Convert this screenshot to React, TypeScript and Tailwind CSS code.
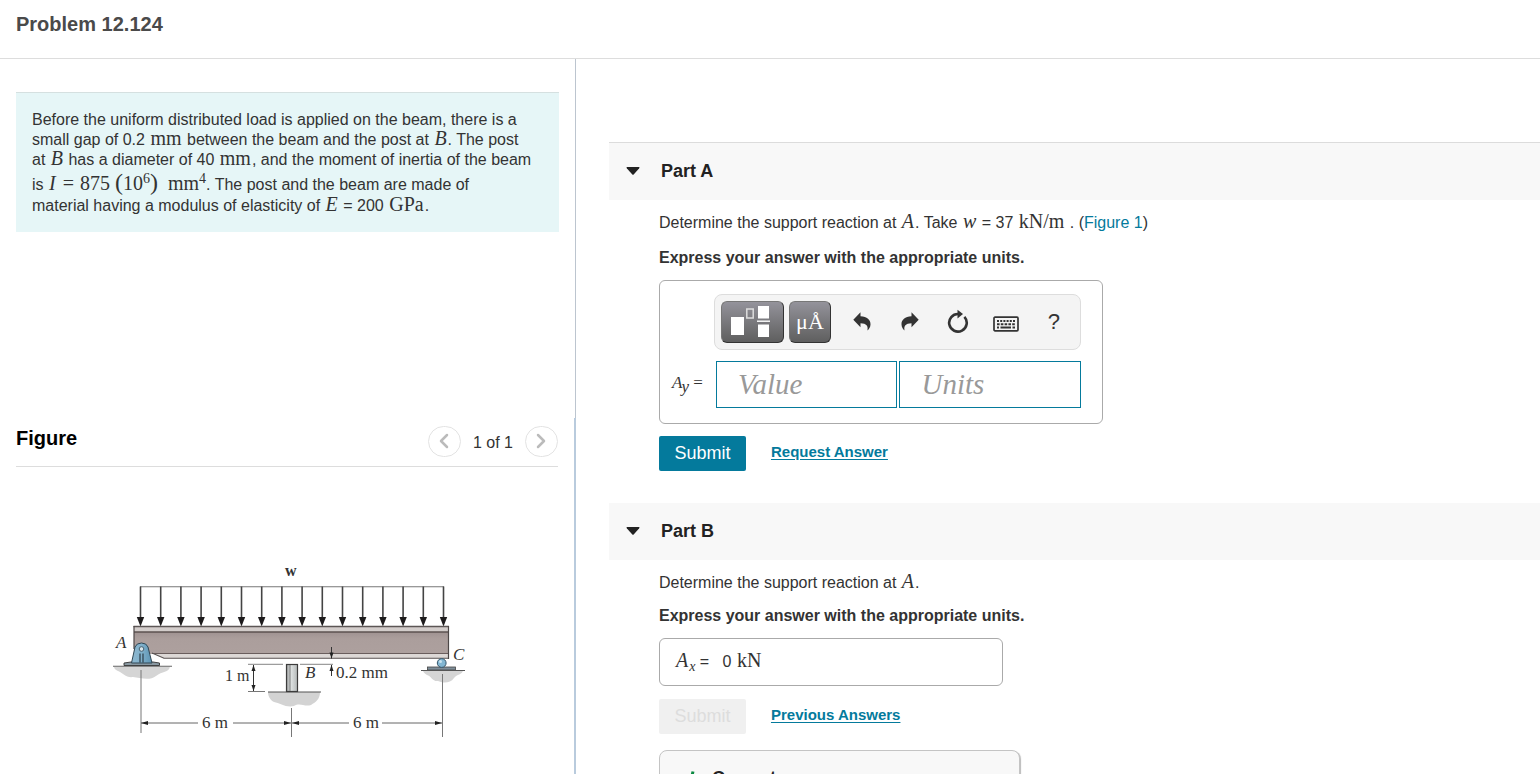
import React from "react";
import { ChevronLeft, ChevronRight } from "lucide-react";

function Sym({ children }: { children: React.ReactNode }) {
  return (
    <i className="px-px font-['Liberation_Serif',serif] text-[20px] leading-4">{children}</i>
  );
}

function Unit({ children }: { children: React.ReactNode }) {
  return (
    <span className="px-px font-['Liberation_Serif',serif] text-[20px] leading-4">{children}</span>
  );
}

function HArrow({ from, to, y }: { from: number; to: number; y: number }) {
  const d = to > from ? -7 : 7;
  return (
    <g>
      <line x1={from} y1={y} x2={to} y2={y} stroke="#555" strokeWidth="0.9" />
      <polygon points={`${to},${y} ${to + d},${y - 2} ${to + d},${y + 2}`} fill="#222" />
    </g>
  );
}

function VArrow({ x, from, to }: { x: number; from: number; to: number }) {
  const d = to > from ? -6 : 6;
  return (
    <g>
      <line x1={x} y1={from} x2={x} y2={to} stroke="#333" strokeWidth="1" />
      <polygon points={`${x},${to} ${x - 2},${to + d} ${x + 2},${to + d}`} fill="#222" />
    </g>
  );
}

function BeamFigure() {
  const loads = Array.from({ length: 16 }, (_, i) => 40.5 + i * 20.2);
  return (
    <svg
      viewBox="0 0 380 190"
      role="img"
      aria-label="Beam ABC with a uniform load w"
      className="h-[190px] w-[380px] font-['Liberation_Serif',serif]"
      fill="#333"
    >
      <defs>
        <linearGradient id="web" x1="0" y1="0" x2="0" y2="1">
          <stop offset="0" stopColor="#9f9291" />
          <stop offset="0.3" stopColor="#ab9e9c" />
          <stop offset="1" stopColor="#ada09e" />
        </linearGradient>
        <linearGradient id="steel" x1="0" y1="0" x2="1" y2="0">
          <stop offset="0" stopColor="#8fb9d0" />
          <stop offset="0.5" stopColor="#7fb0cb" />
          <stop offset="1" stopColor="#5c93b2" />
        </linearGradient>
        <linearGradient id="post" x1="0" y1="0" x2="1" y2="0">
          <stop offset="0" stopColor="#9a9c9c" />
          <stop offset="0.4" stopColor="#dfe3e3" />
          <stop offset="1" stopColor="#b4b8b8" />
        </linearGradient>
      </defs>

      <line x1="40" y1="31.8" x2="344" y2="31.8" stroke="#777" strokeWidth="1.1" />
      {loads.map((x) => (
        <g key={x}>
          <line x1={x} y1="31.5" x2={x} y2="64" stroke="#444" strokeWidth="1.6" />
          <polygon points={`${x - 3.7},62 ${x + 3.7},62 ${x},71.5`} fill="#1d1b1c" />
        </g>
      ))}

      <rect x="34" y="71.5" width="314.5" height="6" fill="#d3cdcb" />
      <rect x="34" y="77" width="314.5" height="22" fill="url(#web)" />
      <polygon points="54,98.5 348.5,98.5 348.5,103.5 64,103.5" fill="#ddd8d6" />
      <line x1="33.5" y1="71.5" x2="349" y2="71.5" stroke="#5c5655" strokeWidth="1.3" />
      <line x1="34" y1="77" x2="348.5" y2="77" stroke="#5c5251" strokeWidth="1.5" />
      <line x1="52" y1="98.5" x2="348.5" y2="98.5" stroke="#6a5e5d" strokeWidth="1.1" />
      <path d="M52 98 L64 103.3 H349" fill="none" stroke="#5c5655" strokeWidth="1.1" />
      <line x1="34" y1="71" x2="34" y2="94" stroke="#4d4747" strokeWidth="1.2" />
      <line x1="348.5" y1="71" x2="348.5" y2="104" stroke="#4d4747" strokeWidth="1.2" />

      <path d="M14 111.5 H70 C69 118 62 116 56 121 C50 126 40 123 33 122 C26 123 23 118 18 116 C15 115 14 113 14 111.5Z" fill="#d5d5d5" />
      <line x1="13" y1="111.3" x2="72" y2="111.3" stroke="#666" strokeWidth="1.1" />
      <path d="M24 110.5 V108 L31 107 H53 L59.5 108 V110.5Z" fill="#8998a1" stroke="#333" strokeWidth="0.9" />
      <path d="M31.5 108 L35 92 Q36.5 88 41.5 88 Q46.5 88 48 92 L52 108Z" fill="url(#steel)" stroke="#304754" strokeWidth="1" />
      <circle cx="41.5" cy="94" r="2.3" fill="#d8e5eb" stroke="#47616f" strokeWidth="1" />
      <path d="M40 98.5 V107.5 M43 98.5 V107.5" stroke="#26343c" strokeWidth="1.1" />

      <path d="M168 137 H220 C220 144 216 147 211 150 C204 152 200 147 194 151 C186 153 180 148 174 147 C170 145 168 141 168 137Z" fill="#d3d3d3" />
      <line x1="168" y1="137" x2="221" y2="137" stroke="#555" strokeWidth="1.1" />
      <rect x="186.5" y="109.5" width="11" height="27" fill="url(#post)" stroke="#3c3c3c" strokeWidth="1.2" />
      <line x1="190" y1="110" x2="190" y2="136" stroke="#666" strokeWidth="0.8" />
      <line x1="148" y1="109.3" x2="183" y2="109.3" stroke="#777" strokeWidth="0.9" />
      <line x1="200" y1="109.3" x2="233" y2="109.3" stroke="#777" strokeWidth="0.9" />
      <line x1="148" y1="136.5" x2="165" y2="136.5" stroke="#777" strokeWidth="1" />
      <VArrow x={153.5} from={122} to={110} />
      <VArrow x={153.5} from={122} to={136} />
      <VArrow x={231.5} from={92} to={103.5} />
      <VArrow x={231.5} from={121} to={110} />

      <path d="M323 115.5 H363 C362 120 357 119 354 123 C350 129 342 128 338 126 C333 127 331 121 327 120 C324 118 323 117 323 115.5Z" fill="#d5d5d5" />
      <rect x="327.5" y="112" width="28" height="3" fill="#7f8e99" stroke="#444" strokeWidth="0.8" />
      <line x1="321" y1="115.5" x2="365" y2="115.5" stroke="#555" strokeWidth="1" />
      <circle cx="341.7" cy="108" r="4.4" fill="#82b6d2" stroke="#35556a" strokeWidth="1" />
      <circle cx="340.5" cy="106.5" r="1.5" fill="#c9e2ee" />

      <line x1="41" y1="115" x2="41" y2="178" stroke="#777" strokeWidth="1" />
      <line x1="191.5" y1="153" x2="191.5" y2="182" stroke="#777" strokeWidth="1" />
      <line x1="342.5" y1="119" x2="342.5" y2="182" stroke="#777" strokeWidth="1" />
      <HArrow from={98} to={41} y={168} />
      <HArrow from={133} to={191} y={168} />
      <HArrow from={249} to={192} y={168} />
      <HArrow from={282} to={342} y={168} />

      <text x="185" y="21" fontSize="16" fontWeight="700">w</text>
      <text x="16" y="93" fontSize="17" fontStyle="italic">A</text>
      <text x="205" y="123" fontSize="17" fontStyle="italic">B</text>
      <text x="353" y="105" fontSize="17" fontStyle="italic">C</text>
      <text x="125" y="126" fontSize="16">1 m</text>
      <text x="236" y="123" fontSize="17">0.2 mm</text>
      <text x="102" y="173" fontSize="17">6 m</text>
      <text x="253" y="173" fontSize="17">6 m</text>
    </svg>
  );
}

function PartHeader({ title, bordered }: { title: string; bordered?: boolean }) {
  return (
    <h2
      className={
        bordered
          ? "border-t border-[#dcdcdc] bg-[#f8f8f8]"
          : "bg-[#f8f8f8]"
      }
    >
      <button type="button" aria-expanded="true" className="flex h-[57px] w-full items-center pb-[2px] pl-[17px] text-left text-[18px] font-bold text-[#222]">
        <svg viewBox="0 0 14 8" className="h-2 w-[14px]" fill="#222" aria-hidden="true">
          <path d="M1 0 H13 Q14 0.2 13.2 1.2 L7.7 7.4 Q7 8 6.3 7.4 L0.8 1.2 Q0 0.2 1 0Z" />
        </svg>
        <span className="pl-[21px]">{title}</span>
      </button>
    </h2>
  );
}

const iconButton = "flex h-10 w-12 items-center justify-center text-[#333]";

function Toolbar() {
  return (
    <div role="toolbar" className="flex h-14 items-center rounded-lg border border-[#ddd] bg-[#f4f4f4] pl-[6px]">
      <button type="button" aria-label="Templates" className="flex h-[42px] w-[63px] items-center justify-center rounded-md border border-[#333] border-t-[#777] border-l-[#777] bg-linear-to-b from-[#94939b] to-[#5f5f5f]">
        <svg viewBox="0 0 63 42" className="h-[42px] w-[63px] shrink-0" aria-hidden="true">
          <rect x="10" y="16" width="13" height="18" fill="#fff" />
          <rect x="25.8" y="8" width="6.4" height="9" fill="none" stroke="#ddd" strokeWidth="1.5" />
          <rect x="37" y="5" width="11" height="12.5" fill="#fff" />
          <rect x="36" y="19.5" width="13" height="1.4" fill="#fff" />
          <rect x="37" y="23.5" width="11" height="12.5" fill="#fff" />
        </svg>
      </button>
      <button type="button" aria-label="Unit symbols" className="ml-[5px] flex h-[42px] w-[42px] items-center justify-center rounded-md border border-[#333] border-t-[#777] border-l-[#777] bg-linear-to-b from-[#94939b] to-[#5f5f5f] font-['Liberation_Serif',serif] text-[22px] text-white">
        μÅ
      </button>
      <button type="button" aria-label="Undo" className={"ml-[7px] pb-[2px] " + iconButton}>
        <svg viewBox="0 0 18 19" className="h-[19px] w-[18px]" fill="currentColor" aria-hidden="true">
          <path d="M0.3 7.7 L7.5 0.3 V4.2 C14 4.4 17.7 8 17.5 12.4 C17.4 15 16 17.3 14.4 18.6 C15.4 14 13.5 11.4 7.5 11.2 V15.2Z" />
        </svg>
      </button>
      <button type="button" aria-label="Redo" className={"pb-[2px] " + iconButton}>
        <svg viewBox="0 0 18 19" className="h-[19px] w-[18px]" fill="currentColor" aria-hidden="true">
          <path d="M17.7 7.7 L10.5 0.3 V4.2 C4 4.4 0.3 8 0.5 12.4 C0.6 15 2 17.3 3.6 18.6 C2.6 14 4.5 11.4 10.5 11.2 V15.2Z" />
        </svg>
      </button>
      <button type="button" aria-label="Reset" className={"pb-[2px] " + iconButton}>
        <svg viewBox="0 0 22 24" className="h-6 w-[22px]" aria-hidden="true">
          <path d="M11.5 5 A8.8 8.8 0 1 0 17.4 7.8" fill="none" stroke="currentColor" strokeWidth="2.6" />
          <path d="M10.5 0.8 L16 5.1 L10.5 9.4Z" fill="currentColor" />
        </svg>
      </button>
      <button type="button" aria-label="Keyboard shortcuts" className={iconButton}>
        <svg viewBox="0 0 26 16" className="mt-1 h-4 w-[26px]" aria-hidden="true">
          <rect x="1" y="1.2" width="24" height="13.6" rx="1" fill="none" stroke="currentColor" strokeWidth="1.7" />
          <path d="M4 5 H22" stroke="currentColor" strokeWidth="2" strokeDasharray="2 1.2" />
          <path d="M4 8.2 H22" stroke="currentColor" strokeWidth="2" strokeDasharray="2.6 1.2" />
          <path d="M4 11.5 H6 M7.5 11.5 H18 M19.5 11.5 H22" stroke="currentColor" strokeWidth="1.8" />
        </svg>
      </button>
      <button type="button" aria-label="Help" className={iconButton + " text-[22px]"}>
        ?
      </button>
    </div>
  );
}

const answerField =
  "h-[47px] min-w-0 flex-1 rounded-none border border-[#047a9c] bg-white pl-[21px] font-['Liberation_Serif',serif] text-[29px] italic text-[#333] outline-none placeholder:text-[#999]";
const linkStyle = "pb-[3px] text-[15px] font-bold text-[#047a9c] underline underline-offset-2";
const pager =
  "flex h-[31px] w-[33px] items-center justify-center rounded-full border border-[#e3e3e3] text-[#bbb]";

export default function App() {
  return (
    <div className="flex h-screen flex-col overflow-hidden bg-white font-['Liberation_Sans',Arial,sans-serif] text-[16px] leading-5 text-[#333]">
      <header className="flex h-[59px] shrink-0 border-b border-[#ddd] pt-[14px] pl-4">
        <h1 className="text-[20px] leading-5 font-bold text-[#4a4a4a]">Problem 12.124</h1>
      </header>

      <main className="flex min-h-0 flex-1">
        <div className="flex w-[37.4%] shrink-0 flex-col">
          <section className="h-[359px] shrink-0 border-r border-[#bcc5cf] pt-[33px] pr-4 pl-4">
            <p className="border-t border-[#d5e0e0] bg-[#e6f6f7] pt-[17px] pr-3 pb-4 pl-4">
              Before the uniform distributed load is applied on the beam, there is a
              <br />
              small gap of 0.2 <Unit>mm</Unit> between the beam and the post at <Sym>B</Sym>. The post
              <br />
              at <Sym>B</Sym> has a diameter of 40 <Unit>mm</Unit>, and the moment of inertia of the beam
              <br />
              is <Sym>I</Sym>
              <span className="font-['Liberation_Serif',serif] text-[20px] leading-[26px] whitespace-nowrap">
                <span className="px-[6px]">=</span>875 <span className="text-[24px] leading-none">(</span>10
                <sup className="text-[14px]">6</sup>
                <span className="text-[24px] leading-none">)</span>&nbsp; mm
                <sup className="text-[14px]">4</sup>
              </span>
              . The post and the beam are made of
              <br />
              material having a modulus of elasticity of <Sym>E</Sym> = 200 <Unit>GPa</Unit>.
            </p>
          </section>

          <section className="min-h-0 flex-1 border-r-2 border-[#b9cbdd] pr-4 pl-4">
            <div className="flex h-[49px] items-center justify-between border-b border-[#ddd]">
              <h2 className="pb-2 text-[20px] font-bold text-black">Figure</h2>
              <div className="flex items-center pb-[2px]">
                <button type="button" aria-label="Previous figure" className={pager}>
                  <ChevronLeft size={24} strokeWidth={2.5} />
                </button>
                <span className="px-3 pt-1">1 of 1</span>
                <button type="button" aria-label="Next figure" className={pager}>
                  <ChevronRight size={24} strokeWidth={2.5} />
                </button>
              </div>
            </div>
            <div className="flex justify-center pt-[88px] pl-[6px]">
              <BeamFigure />
            </div>
          </section>
        </div>

        <div className="min-w-0 flex-1 pt-[83px] pl-[33px]">
          <section>
            <PartHeader title="Part A" bordered />
            <div className="px-[50px] pt-[13px]">
              <p>
                Determine the support reaction at <Sym>A</Sym>. Take <Sym>w</Sym> = 37 <Unit>kN/m</Unit> . (
                <a href="#figure-1" className="text-[#047a9c]">Figure 1</a>)
              </p>
              <p className="pt-[15px] font-bold">Express your answer with the appropriate units.</p>
              <div className="mt-3 w-[444px] max-w-full rounded-md border border-[#aaa] pt-[13px] pr-[21px] pb-[15px] pl-[12px]">
                <div className="pl-[42px]">
                  <Toolbar />
                </div>
                <div className="flex items-center pt-[11px]">
                  <label htmlFor="value" className="w-11 shrink-0 pb-1 font-['Liberation_Serif',serif] text-[17px]">
                    <i>A<sub className="text-[17px]">y</sub></i> =
                  </label>
                  <div className="flex min-w-0 flex-1 gap-[2px]">
                    <input id="value" placeholder="Value" className={answerField} />
                    <input aria-label="Units" placeholder="Units" className={answerField} />
                  </div>
                </div>
              </div>
              <div className="flex items-center gap-[25px] pt-3">
                <button type="button" className="h-[35px] w-[87px] rounded-xs bg-[#047a9c] pb-[2px] text-[18px] text-white">
                  Submit
                </button>
                <a href="#request" className={linkStyle}>Request Answer</a>
              </div>
            </div>
          </section>

          <section className="pt-8">
            <PartHeader title="Part B" />
            <div className="px-[50px] pt-[13px]">
              <p>
                Determine the support reaction at <Sym>A</Sym>.
              </p>
              <p className="pt-[13px] font-bold">Express your answer with the appropriate units.</p>
              <div className="mt-3 flex h-12 w-[344px] max-w-full items-center rounded-md border border-[#aaa] pl-[15px]">
                <p>
                  <Sym>A</Sym>
                  <sub className="text-[14px]"><i className="font-['Liberation_Serif',serif]">x</i></sub> =&nbsp;&nbsp; 0{" "}
                  <Unit>kN</Unit>
                </p>
              </div>
              <div className="flex items-center gap-[25px] pt-[13px]">
                <button type="button" disabled className="h-[35px] w-[87px] rounded-xs bg-[#f0f0f0] pb-[2px] text-[18px] text-[#ddd]">
                  Submit
                </button>
                <a href="#previous" className={linkStyle}>Previous Answers</a>
              </div>
              <div className="mt-4 flex h-20 w-[361px] max-w-full items-start rounded-lg border border-[#c4c4c4] bg-[#f8f8f8] pt-[17px] pl-6 shadow-[1px_1px_1px_#bbb]">
                <svg viewBox="0 0 18 18" className="h-[18px] w-[18px]" aria-hidden="true">
                  <path d="M1 10 L6 16 L9 3.5" fill="none" stroke="#0b8a42" strokeWidth="3" />
                </svg>
                <strong className="pl-[10px] text-[18px] text-[#222]">Correct</strong>
              </div>
            </div>
          </section>
        </div>
      </main>
    </div>
  );
}
